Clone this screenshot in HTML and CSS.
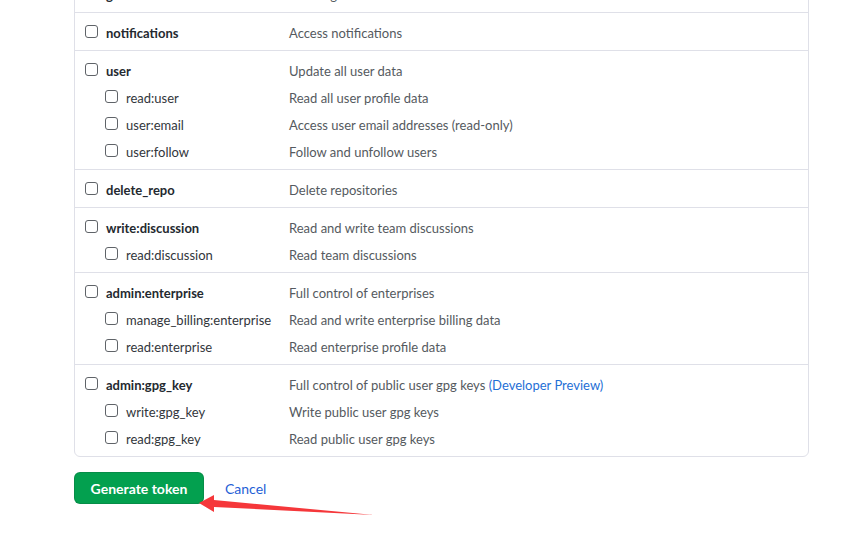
FILE: index.html
```html
<!DOCTYPE html>
<html lang="en">
<head>
<meta charset="utf-8">
<title>Scopes</title>
<link rel="stylesheet" href="styles.css">
</head>
<body>
<div class="page">
  <div class="scopes">
    <div class="group">
      <div class="row"><label class="scope main"><input type="checkbox">gist</label><span class="desc">Create gists</span></div>
    </div>
    <div class="group">
      <div class="row"><label class="scope main"><input type="checkbox">notifications</label><span class="desc">Access notifications</span></div>
    </div>
    <div class="group">
      <div class="row"><label class="scope main"><input type="checkbox">user</label><span class="desc">Update all user data</span></div>
      <div class="row"><label class="scope sub"><input type="checkbox">read:user</label><span class="desc">Read all user profile data</span></div>
      <div class="row"><label class="scope sub"><input type="checkbox">user:email</label><span class="desc">Access user email addresses (read-only)</span></div>
      <div class="row"><label class="scope sub"><input type="checkbox">user:follow</label><span class="desc">Follow and unfollow users</span></div>
    </div>
    <div class="group">
      <div class="row"><label class="scope main"><input type="checkbox">delete_repo</label><span class="desc">Delete repositories</span></div>
    </div>
    <div class="group">
      <div class="row"><label class="scope main"><input type="checkbox">write:discussion</label><span class="desc">Read and write team discussions</span></div>
      <div class="row"><label class="scope sub"><input type="checkbox">read:discussion</label><span class="desc">Read team discussions</span></div>
    </div>
    <div class="group">
      <div class="row"><label class="scope main"><input type="checkbox">admin:enterprise</label><span class="desc">Full control of enterprises</span></div>
      <div class="row"><label class="scope sub"><input type="checkbox">manage_billing:enterprise</label><span class="desc">Read and write enterprise billing data</span></div>
      <div class="row"><label class="scope sub"><input type="checkbox">read:enterprise</label><span class="desc">Read enterprise profile data</span></div>
    </div>
    <div class="group">
      <div class="row"><label class="scope main"><input type="checkbox">admin:gpg_key</label><span class="desc">Full control of public user gpg keys <a class="link" href="#">(Developer Preview)</a></span></div>
      <div class="row"><label class="scope sub"><input type="checkbox">write:gpg_key</label><span class="desc">Write public user gpg keys</span></div>
      <div class="row"><label class="scope sub"><input type="checkbox">read:gpg_key</label><span class="desc">Read public user gpg keys</span></div>
    </div>
  </div>
  <div class="actions">
    <button class="btn-primary" type="button">Generate token</button>
    <a class="cancel" href="#">Cancel</a>
  </div>
</div>
<svg class="arrow" width="861" height="549" viewBox="0 0 861 549" aria-hidden="true">
  <polygon points="199,503 214,495 214,500 374,515 214,507 214,512" fill="#f5373a"/>
</svg>
</body>
</html>
```

FILE: styles.css
```css
html, body {
  margin: 0;
  padding: 0;
  background: #ffffff;
}
body {
  font-family: Lato, "Noto Sans", Arial, sans-serif;
  font-size: 13px;
  color: #24292f;
  position: relative;
  width: 861px;
  height: 549px;
  overflow: hidden;
}
.page {
  margin-left: 74px;
  width: 735px;
  margin-top: -27px;
}
.scopes {
  border: 1px solid #dfe0e8;
  border-radius: 6px;
}
.group {
  padding: 6px 10px 4px 10px;
  border-top: 1px solid #dfe0e8;
}
.group:first-child {
  border-top: 0;
  padding-top: 7px;
}
.row {
  display: grid;
  grid-template-columns: 204px 1fr;
  height: 27px;
  align-items: center;
}
.scope {
  display: flex;
  align-items: center;
  white-space: nowrap;
}
.scope.main {
  font-weight: 700;
  color: #24292f;
}
.scope.sub {
  padding-left: 20px;
  color: #32363b;
}
.scope input {
  appearance: none;
  -webkit-appearance: none;
  width: 13px;
  height: 13px;
  margin: 0 8px 0 0;
  border: 1px solid #5f6368;
  border-radius: 3px;
  background: #fff;
  flex: none;
  position: relative;
  top: -1px;
}
.desc {
  color: #555a60;
  white-space: nowrap;
}
.link {
  color: #1f6fd6;
  text-decoration: none;
}
.actions {
  margin-top: 15px;
  display: flex;
  align-items: center;
  gap: 21px;
}
.btn-primary {
  width: 130px;
  height: 32px;
  border: 1px solid rgba(27, 31, 36, 0.15);
  border-radius: 6px;
  background: #03a04f;
  color: #ffffff;
  font-family: inherit;
  font-size: 14px;
  font-weight: 700;
  padding: 0;
}
.cancel {
  color: #1f5fd6;
  text-decoration: none;
  font-size: 14px;
}
.arrow {
  position: absolute;
  left: 0;
  top: 0;
  pointer-events: none;
}
```
